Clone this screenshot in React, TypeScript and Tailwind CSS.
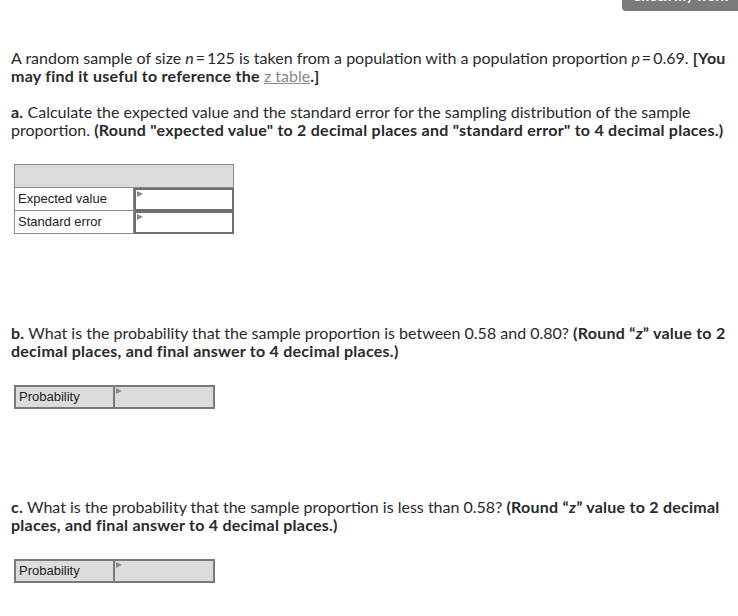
import React from "react";

const Flag = () => (
  <span className="absolute left-[1px] top-[1px] h-0 w-0 border-y-[3px] border-l-[6px] border-y-transparent border-l-[#8a8a8a]" />
);

function ProbTable() {
  return (
    <div className="ml-[14px] flex h-[24px] w-[201px] border-2 border-[#7a7a7a] bg-[#dcdcdc]">
      <div className="flex w-[99px] items-center border-r-2 border-[#7a7a7a] pl-[3px] text-[13px] text-[#222]" style={{ fontFamily: '"Liberation Sans", Arial, sans-serif' }}>
        Probability
      </div>
      <div className="relative flex-1">
        <Flag />
      </div>
    </div>
  );
}

const B = ({ children }: { children: React.ReactNode }) => (
  <b className="tracking-[0.25px]">{children}</b>
);

export default function App() {
  const body = { fontFamily: 'Lato, "Open Sans", sans-serif' };
  const cell = { fontFamily: '"Liberation Sans", Arial, sans-serif' };
  return (
    <div className="relative h-[616px] w-[738px] overflow-hidden bg-white text-[16px] leading-[18px] text-[#2a2a2a]" style={body}>
      <div className="flex h-[11px] justify-end">
        <div className="-mt-[19px] flex h-[30px] w-[116px] items-center justify-center rounded-bl-[4px] bg-[#7a7a7a] text-[14px] font-bold text-white">
          Check my work
        </div>
      </div>

      <p className="ml-[11px] mt-[38px] whitespace-nowrap">
        A random sample of size <i>n</i>{"\u2009=\u2009"}125 is taken from a population with a population proportion <i>p</i>{"\u2009=\u2009"}0.69. <B>[You</B>
        <br />
        <B>may find it useful to reference the </B>
        <span className="text-[#888] underline">z table</span>
        <B>.]</B>
      </p>

      <p className="ml-[11px] mt-[18px] whitespace-nowrap">
        <B>a.</B> Calculate the expected value and the standard error for the sampling distribution of the sample
        <br />
        proportion. <B>(Round "expected value" to 2 decimal places and "standard error" to 4 decimal places.)</B>
      </p>

      <div className="ml-[14px] mt-[25px] w-[220px]">
        <div className="h-[24px] border border-[#8a8a8a] bg-[#dcdcdc]" />
        <div className="flex h-[23px]">
          <div className="flex w-[120px] items-center border-x border-b border-[#8a8a8a] pl-[3px] text-[13px] text-[#222]" style={cell}>
            Expected value
          </div>
          <div className="relative flex-1 border-2 border-[#6e6e6e] bg-white">
            <Flag />
          </div>
        </div>
        <div className="flex h-[23px]">
          <div className="flex w-[120px] items-center border-x border-b border-[#8a8a8a] pl-[3px] text-[13px] text-[#222]" style={cell}>
            Standard error
          </div>
          <div className="relative flex-1 border-2 border-[#6e6e6e] bg-white">
            <Flag />
          </div>
        </div>
      </div>

      <p className="ml-[11px] mt-[90px] whitespace-nowrap">
        <B>b.</B> What is the probability that the sample proportion is between 0.58 and 0.80? <B>(Round “<i>z</i>” value to 2</B>
        <br />
        <B>decimal places, and final answer to 4 decimal places.)</B>
      </p>

      <div className="mt-[25px]">
        <ProbTable />
      </div>

      <p className="ml-[11px] mt-[89px] whitespace-nowrap">
        <B>c.</B> What is the probability that the sample proportion is less than 0.58? <B>(Round “<i>z</i>” value to 2 decimal</B>
        <br />
        <B>places, and final answer to 4 decimal places.)</B>
      </p>

      <div className="mt-[25px]">
        <ProbTable />
      </div>
    </div>
  );
}
